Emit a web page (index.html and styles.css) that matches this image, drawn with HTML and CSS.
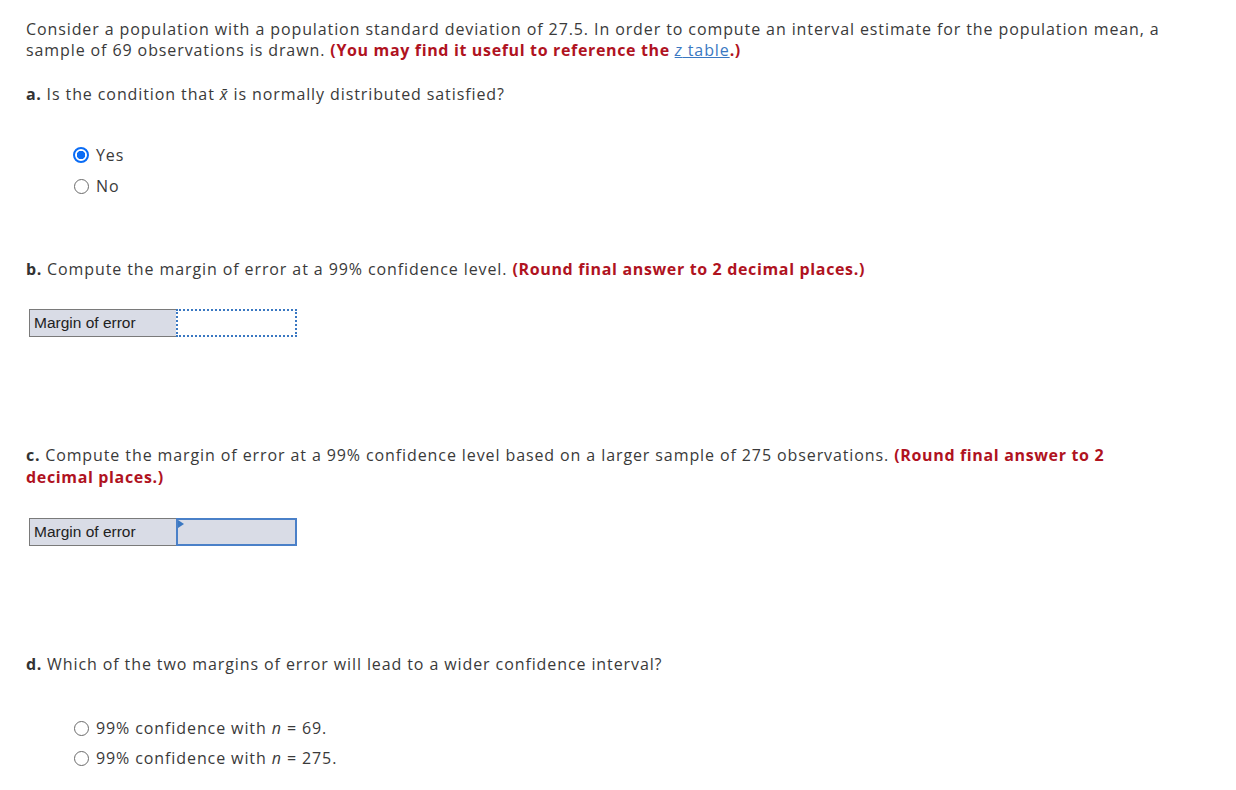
FILE: index.html
```html
<!DOCTYPE html>
<html>
<head>
<meta charset="utf-8">
<link rel="stylesheet" href="styles.css">
</head>
<body>
<div class="page">
  <p class="intro">Consider a population with a population standard deviation of 27.5. In order to compute an interval estimate for the population mean, a sample of 69 observations is drawn. <b class="hint">(You may find it useful to reference the <a class="link" href="#"><i>z</i> table</a>.)</b></p>

  <p class="q q-a"><b>a.</b> Is the condition that <i class="xbar">x&#772;</i> is normally distributed satisfied?</p>
  <div class="options opts-a">
    <label class="opt"><span class="radio checked"></span>Yes</label>
    <label class="opt"><span class="radio"></span>No</label>
  </div>

  <p class="q q-b"><b>b.</b> Compute the margin of error at a 99% confidence level. <b class="hint">(Round final answer to 2 decimal places.)</b></p>
  <div class="answer">
    <div class="cell-label">Margin of error</div>
    <div class="cell-input dotted"></div>
  </div>

  <p class="q q-c"><b>c.</b> Compute the margin of error at a 99% confidence level based on a larger sample of 275 observations. <b class="hint">(Round final answer to 2 decimal places.)</b></p>
  <div class="answer">
    <div class="cell-label">Margin of error</div>
    <div class="cell-input solid"><span class="flag"></span></div>
  </div>

  <p class="q q-d"><b>d.</b> Which of the two margins of error will lead to a wider confidence interval?</p>
  <div class="options opts-d">
    <label class="opt"><span class="radio"></span><span>99% confidence with <i class="n">n</i> = 69.</span></label>
    <label class="opt"><span class="radio"></span><span>99% confidence with <i class="n">n</i> = 275.</span></label>
  </div>
</div>
</body>
</html>
```
FILE: styles.css
```css
html, body {
  margin: 0;
  padding: 0;
  background: #ffffff;
}
body {
  font-family: "Open Sans", Lato, sans-serif;
  font-size: 16px;
  letter-spacing: 0.9px;
  color: #3a3a3a;
}
.page {
  padding: 19px 26px 0 26px;
  width: 1135px;
}
p {
  margin: 0;
  line-height: 21px;
}
b {
  font-weight: 700;
  letter-spacing: 0.65px;
}
.hint {
  color: #b0131f;
}
.link {
  color: #3a78c2;
  font-weight: 400;
  letter-spacing: 0.9px;
  text-decoration: underline;
}
.link i,
.n,
.xbar {
  font-style: italic;
}
.q b:first-child {
  color: #333;
}
.q-a {
  margin-top: 23px;
}
.options {
  display: flex;
  flex-direction: column;
  padding-left: 48px;
}
.opts-a {
  margin-top: 40px;
  gap: 11px;
}
.opt {
  display: flex;
  align-items: center;
  height: 20px;
  gap: 7px;
}
.radio {
  width: 15px;
  height: 15px;
  box-sizing: border-box;
  border: 1px solid #6b6b6b;
  border-radius: 50%;
  background: #fff;
  flex: none;
}
.radio.checked {
  border: 2px solid #0a6cf5;
  background: radial-gradient(circle, #0a6cf5 0 4px, #fff 4.5px);
  width: 16px;
  height: 16px;
  margin-left: -1px;
  margin-right: 0;
}
.q-b {
  margin-top: 63px;
}
.answer {
  display: flex;
  margin-top: 29px;
  margin-left: 3px;
  width: 268px;
  height: 28px;
  border: 1px solid #7a7a7a;
  box-sizing: border-box;
  background: #d9dce6;
  letter-spacing: 0;
}
.cell-label {
  width: 147px;
  border-right: 1px solid #7a7a7a;
  font-family: "Liberation Sans", Arial, sans-serif;
  font-size: 15.5px;
  color: #222;
  line-height: 26px;
  padding-left: 4px;
  box-sizing: border-box;
}
.cell-input {
  flex: 1;
  position: relative;
  box-sizing: border-box;
}
.cell-input.dotted {
  background: #fff;
  border: 2px dotted #3a78c2;
  margin: -1px;
}
.cell-input.solid {
  border: 2px solid #4a80c8;
  margin: -1px;
}
.flag {
  position: absolute;
  left: 0;
  top: 0;
  width: 0;
  height: 0;
  border-top: 4px solid transparent;
  border-bottom: 4px solid transparent;
  border-left: 6px solid #3a78c2;
}
.q-c {
  margin-top: 107px;
  line-height: 22px;
}
.q-c + .answer {
  margin-top: 30px;
}
.q-d {
  margin-top: 108px;
}
.opts-d {
  margin-top: 43px;
  gap: 10px;
}
```
